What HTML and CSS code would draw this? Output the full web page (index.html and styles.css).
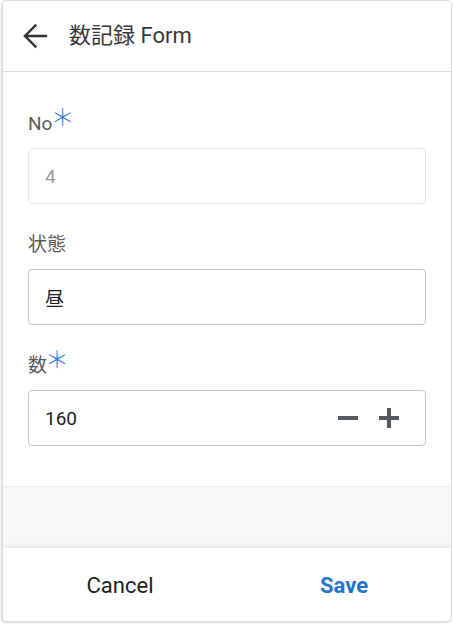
FILE: index.html
```html
<!DOCTYPE html>
<html lang="ja">
<head>
<meta charset="utf-8">
<title>数記録 Form</title>
<link rel="stylesheet" href="styles.css">
</head>
<body>
<div class="card">
  <header class="header">
    <button class="back" aria-label="Back">
      <svg width="26" height="26" viewBox="0 0 26 26"><path d="M24 13H3M13.5 2.5L3 13l10.5 10.5" fill="none" stroke="#333" stroke-width="2.4" stroke-linecap="square"/></svg>
    </button>
    <h1 class="title">数記録 Form</h1>
  </header>
  <main class="form">
    <div class="field">
      <label class="label">No<span class="req">＊</span></label>
      <div class="input disabled">4</div>
    </div>
    <div class="field">
      <label class="label">状態</label>
      <div class="input">昼</div>
    </div>
    <div class="field">
      <label class="label">数<span class="req">＊</span></label>
      <div class="input">
        <span class="value">160</span>
        <span class="steppers">
          <svg width="20" height="20" viewBox="0 0 20 20"><path d="M0 10h20" stroke="#555a60" stroke-width="4"/></svg>
          <svg width="20" height="20" viewBox="0 0 20 20"><path d="M0 10h20M10 0v20" stroke="#555a60" stroke-width="4"/></svg>
        </span>
      </div>
    </div>
  </main>
  <div class="spacer"></div>
  <footer class="footer">
    <button class="btn cancel">Cancel</button>
    <button class="btn save">Save</button>
  </footer>
</div>
</body>
</html>
```
FILE: styles.css
```css
* { box-sizing: border-box; }
html, body { margin: 0; height: 100%; }
body {
  background: #fff;
  padding: 1px 2px 3px 3px;
  font-family: Roboto, "Noto Sans CJK JP", sans-serif;
}
.card {
  height: 620px;
  display: flex;
  flex-direction: column;
  border-radius: 4px;
  overflow: hidden;
  background: #fff;
  box-shadow: 0 0 0 1px #dcdcdc, -1px 1px 3px rgba(0,0,0,0.3);
}
.header {
  height: 71px;
  flex: none;
  display: flex;
  align-items: center;
  border-bottom: 1px solid #dedede;
  padding-left: 19px;
}
.back {
  border: 0;
  background: none;
  padding: 0;
  width: 26px;
  height: 26px;
  display: flex;
  margin-top: -1px;
}
.title {
  margin: 0 0 0 21px;
  font-weight: 400;
  font-size: 22px;
  color: #383838;
  line-height: 1;
}
.form {
  flex: none;
  padding: 40px 25px 40px 25px;
  display: flex;
  flex-direction: column;
  gap: 29px;
  box-shadow: 0 1px 2px rgba(0,0,0,0.06);
  position: relative;
}
.field {
  display: flex;
  flex-direction: column;
  gap: 12px;
}
.label {
  height: 24px;
  line-height: 24px;
  font-size: 19px;
  color: #5c5c5c;
  display: flex;
  align-items: center;
}
.req {
  font-family: "Noto Sans CJK JP", sans-serif;
  font-weight: 300;
  color: #3a82e0;
  font-size: 24px;
  line-height: 1;
  margin-left: -2px;
  position: relative;
  top: -8px;
}
.input {
  height: 56px;
  border: 1px solid #c4c4c8;
  border-radius: 4px;
  display: flex;
  align-items: center;
  padding: 0 26px 0 16px;
  font-size: 19px;
  color: #1e1e1e;
}
.input.disabled {
  border-color: #e6e6ea;
  color: #9a9a9a;
}
.value { flex: 1; }
.steppers {
  display: flex;
  gap: 21px;
}
.spacer {
  flex: 1;
  background: #f7f8fa;
}
.footer {
  height: 73px;
  flex: none;
  display: grid;
  grid-template-columns: 224px 224px;
  padding-left: 5px;
  background: #fff;
  box-shadow: 0 -2px 5px rgba(0,0,0,0.07);
  position: relative;
}
.btn {
  border: 0;
  background: none;
  font-family: Roboto, sans-serif;
  font-size: 22px;
  padding: 2px 0 0 0;
}
.cancel { color: #222; }
.save { color: #1f75cc; font-weight: 700; }
```
